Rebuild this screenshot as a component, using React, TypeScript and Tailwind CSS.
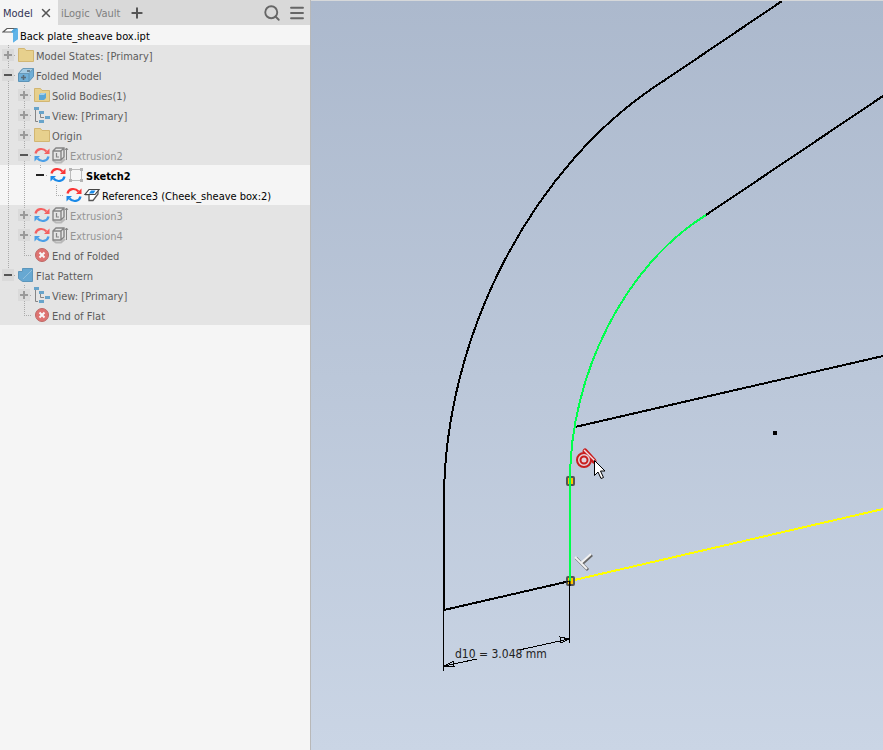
import { Menu, Plus, Search, X } from "lucide-react";

type IconName = "folder" | "solid" | "bodies" | "view" | "extrusion" | "sketch" | "reference" | "end" | "flat";

type TreeRow = {
  label: string;
  icon: IconName;
  // one entry per ancestor column, true where the guide line carries on
  guides: boolean[];
  expander?: "plus" | "minus";
  last?: boolean;
  update?: boolean;
  active?: boolean;
  bold?: boolean;
  muted?: boolean;
};

const rows: TreeRow[] = [
  { label: "Model States: [Primary]", icon: "folder", guides: [], expander: "plus" },
  { label: "Folded Model", icon: "solid", guides: [], expander: "minus" },
  { label: "Solid Bodies(1)", icon: "bodies", guides: [true], expander: "plus" },
  { label: "View: [Primary]", icon: "view", guides: [true], expander: "plus" },
  { label: "Origin", icon: "folder", guides: [true], expander: "plus" },
  { label: "Extrusion2", icon: "extrusion", guides: [true], expander: "minus", update: true, muted: true },
  { label: "Sketch2", icon: "sketch", guides: [true, true], expander: "minus", last: true, update: true, active: true, bold: true },
  { label: "Reference3 (Cheek_sheave box:2)", icon: "reference", guides: [true, true, false], last: true, update: true, active: true },
  { label: "Extrusion3", icon: "extrusion", guides: [true], expander: "plus", update: true, muted: true },
  { label: "Extrusion4", icon: "extrusion", guides: [true], expander: "plus", update: true, muted: true },
  { label: "End of Folded", icon: "end", guides: [true], last: true },
  { label: "Flat Pattern", icon: "flat", guides: [], expander: "minus", last: true },
  { label: "View: [Primary]", icon: "view", guides: [false], expander: "plus" },
  { label: "End of Flat", icon: "end", guides: [false], last: true },
];

const PartIcon = () => (
  <svg className="h-4 w-4 shrink-0" viewBox="0 0 16 16" fill="none">
    <path d="M1 5 5 1.5H14L10 5Z" fill="#fff" stroke="#5a5a5a" strokeWidth="1.2" />
    <path d="M9 5 12 1.5H16V12L11 15.5V6Z" fill="#4fa9e2" />
    <path d="M11 6 16 1.5V12L11 15.5Z" fill="#61b4e8" />
  </svg>
);

const UpdateIcon = () => (
  <svg className="h-4 w-4 shrink-0" viewBox="0 0 16 16" fill="none">
    <path d="M1.5 6.5C2.5 1.5 9 0.5 12.5 4.5" stroke="#fa3636" strokeWidth="2.2" />
    <path d="M15.5 1.5V7H10Z" fill="#fa3636" />
    <path d="M14.5 9.5C13.5 14.5 7 15.5 3.5 11.5" stroke="#1989e8" strokeWidth="2.2" />
    <path d="M0.5 14.5V9H6Z" fill="#1989e8" />
  </svg>
);

const RowIcon = ({ name }: { name: IconName }) => (
  <svg className="h-4 w-4 shrink-0 overflow-visible" viewBox="0 0 16 16" fill="none">
    {name === "folder" && <path d="M0.5 1.5H6.5L8 3.5H15.5V14.5H0.5Z" fill="#e8ca70" stroke="#cda74c" />}
    {name === "bodies" && (
      <>
        <path d="M0.5 1.5H6.5L8 3.5H15.5V14.5H0.5Z" fill="#e8ca70" stroke="#cda74c" />
        <path d="M5 8 7 6H12V11L10 13H5Z" fill="#2f93d3" />
        <path d="M5 8 7 6H12L10 8Z" fill="#8cc8ec" />
      </>
    )}
    {name === "solid" && (
      <>
        <path d="M0.5 6.5 5 1.5H15.5V9.5L11 14.5H0.5Z" fill="#4a9ed3" stroke="#2f78a8" />
        <path d="M0.5 6.5 5 1.5H15.5L11 6.5Z" fill="#8fc3e3" stroke="#3f82ad" />
        <path d="M11 6.5V14.5" stroke="#2f78a8" />
        <path d="M9 4H12M5.5 8V13M3 10.5H8" stroke="#2b4252" strokeWidth="1.5" />
      </>
    )}
    {name === "view" && (
      <>
        <path d="M4.5 2.5H1.5V14.5H4M6.5 7V10.5H10" stroke="#666" />
        <path d="M0 0H5V3H0ZM5 4H10V7H5ZM11 9H16V12H11ZM5 13H10V16H5Z" fill="#3f8fc2" />
      </>
    )}
    {name === "extrusion" && (
      <>
        <path d="M1 13.5 4 15.5H9L13 12" stroke="#aaa" strokeWidth="2" />
        <path d="M1 4 4 1H12V10L9 13H1ZM1 4H9V13M9 4 12 1" stroke="#666" strokeWidth="1.4" />
        <path d="M4.5 6V10H7" stroke="#666" strokeWidth="1.2" />
        <path d="M14.5 13V1M13 3 14.5 1 16 3" stroke="#666" />
      </>
    )}
    {name === "sketch" && (
      <>
        <path d="M2.5 2.5H13.5V13.5H2.5Z" stroke="#bbb" />
        <path d="M1 1H4V4H1ZM12 1H15V4H12ZM1 12H4V15H1ZM12 12H15V15H12Z" fill="#b4b4b4" />
      </>
    )}
    {name === "reference" && (
      <>
        <path d="M1 7.5H5V13.5H9L14 7V3" fill="#fff" stroke="#555" strokeWidth="1.3" />
        <path d="M5 2.5H15L11 7.5H1Z" fill="#fff" stroke="#444" strokeWidth="1.2" />
        <path d="M7 3.5H11.5L9.5 6.5H5Z" fill="#1b8be8" />
      </>
    )}
    {name === "end" && (
      <>
        <circle cx="8" cy="8" r="6.5" fill="#dc4f4c" stroke="#b0403d" />
        <path d="M5.5 5.5 10.5 10.5M10.5 5.5 5.5 10.5" stroke="#fff" strokeWidth="2" />
      </>
    )}
    {name === "flat" && (
      <>
        <path d="M0.5 4.5H4.5V1.5H14.5V14.5H4.5L0.5 11.5Z" fill="#3e94cd" stroke="#2f7cae" />
        <path d="M5 12 14 3" stroke="#74b3da" />
      </>
    )}
  </svg>
);

const Guide = ({ on }: { on: boolean }) => (
  <svg className="h-5 w-4 shrink-0" viewBox="0 0 16 20">
    {on && <path d="M8.5 0V20" stroke="#aaa" strokeDasharray="1 1" />}
  </svg>
);

const Branch = ({ row }: { row: TreeRow }) => (
  <svg className="h-5 w-4 shrink-0" viewBox="0 0 16 20">
    <path d={row.last ? "M8.5 0V10.5M8 10.5H16" : "M8.5 0V20M8 10.5H16"} stroke="#aaa" strokeDasharray="1 1" fill="none" />
    {row.expander && <path d="M2 4H14V16H2Z" fill={row.active ? "#f5f5f5" : "#dadada"} />}
    {row.expander && <path d="M4 9H12V11H4Z" fill={row.expander === "plus" ? "#999" : row.active ? "#222" : "#555"} />}
    {row.expander === "plus" && <path d="M7 6H9V14H7Z" fill="#999" />}
  </svg>
);

const TreeItem = ({ row }: { row: TreeRow }) => (
  <li className={`flex h-5 items-center ${row.active ? "bg-[#f5f5f5] text-black" : "bg-[#e4e4e4] text-[#5c5c5c]"}`}>
    {row.guides.map((on, i) => (
      <Guide key={i} on={on} />
    ))}
    <Branch row={row} />
    <span className={`ml-0.5 flex gap-0.5 ${row.active ? "" : "opacity-75"}`}>
      {row.update && <UpdateIcon />}
      <RowIcon name={row.icon} />
    </span>
    <span className={`ml-0.5 pt-1 whitespace-nowrap ${row.bold ? "font-bold" : ""} ${row.muted ? "text-[#949494]" : ""}`}>{row.label}</span>
  </li>
);

const BrowserPanel = () => (
  <aside className="w-[311px] shrink-0 border-r border-[#b8b8b8] bg-[#f5f5f5]">
    <div className="flex h-[25px] items-center bg-[#d9d9d9] text-[#808080]">
      <div className="flex h-full w-[58px] items-center gap-1.5 bg-[#f5f5f5] pl-[3px] text-[#333355]">
        <button type="button" className="pt-0.5">Model</button>
        <button type="button" aria-label="Close tab">
          <X size={14} strokeWidth={2.5} color="#555" />
        </button>
      </div>
      <button type="button" className="ml-[3px] pt-0.5">iLogic</button>
      <button type="button" className="ml-1.5 pt-0.5">Vault</button>
      <button type="button" aria-label="Add tab" className="ml-2">
        <Plus size={16} strokeWidth={3} color="#555" />
      </button>
      <button type="button" aria-label="Search" className="ml-auto">
        <Search size={18} strokeWidth={2.5} color="#666" />
      </button>
      <button type="button" aria-label="Menu" className="mr-1 ml-[7px]">
        <Menu size={18} strokeWidth={2.5} color="#666" />
      </button>
    </div>
    <div className="flex h-5 items-center gap-0.5 pl-0.5 text-black">
      <PartIcon />
      <span className="pt-1">Back plate_sheave box.ipt</span>
    </div>
    <ul>
      {rows.map((row, i) => (
        <TreeItem key={i} row={row} />
      ))}
    </ul>
  </aside>
);

const SketchView = () => (
  <main className="min-w-0 flex-1 border-t border-[#d6d8da] bg-linear-to-b from-[#acb9cd] to-[#cad5e5]">
    <svg className="h-full w-full" viewBox="311 1 572 749" preserveAspectRatio="xMinYMin slice" fill="none">
      {/* Profile edges */}
      <g stroke="#000" strokeWidth="2" shapeRendering="crispEdges">
        <path d="M782 1 665 80C530 165 444 340 444 500V610L570 581" />
        <path d="M883 96 706 215" />
        <path d="M575 427 883 356" />
      </g>
      <path d="M570 581 883 509" stroke="#ff0" strokeWidth="2" shapeRendering="crispEdges" />
      <path d="M773 431H777V435H773Z" fill="#000" />

      {/* Grips */}
      <g fill="#ffc400" stroke="#555" strokeWidth="2">
        <rect x="567" y="477" width="7" height="8" rx="1" />
        <rect x="567" y="577" width="7" height="8" rx="1" />
      </g>
      <path d="M706 215C625 265 570 375 570 480V581" stroke="#00ff4c" strokeWidth="2" shapeRendering="crispEdges" />
      <path d="M564 582.5 570 581V586" stroke="#000" />

      {/* Dimension */}
      <g stroke="#000" shapeRendering="crispEdges">
        <path d="M443.5 610V671M569.5 581V643" />
        <path d="M444 666 477 659M519 650 569 639" />
        <path d="M444 666 453 661.5 454 666ZM569 639 560 637 561 643Z" />
      </g>
      <text x="455" y="658" fontSize="12" fill="#222">d10 = 3.048 mm</text>

      {/* Perpendicular glyph */}
      <path d="M576 558 588 570M582 564 592 555" stroke="#666" strokeWidth="3" />
      <path d="M575 557 587 569M581 563 591 554" stroke="#f2f2f2" strokeWidth="2" />

      {/* Tangent glyph */}
      <g stroke="#c81e1e">
        <path d="M585 451 594 461" strokeWidth="5" strokeLinecap="round" />
        <circle cx="584" cy="460" r="7" fill="#e4d3dc" strokeWidth="2" />
        <circle cx="584" cy="460" r="3.5" strokeWidth="2" />
        <path d="M584 450 595 461" stroke="#f4dfe3" strokeWidth="1.4" />
      </g>

      {/* Pointer */}
      <path d="M594.5 460.5V475.5L598 472 601 478.5 603.5 477.5 600.5 471H605Z" fill="#fff" stroke="#000" />
    </svg>
  </main>
);

const App = () => {
  return (
    <div className="flex h-screen overflow-hidden font-['DejaVu_Sans_Condensed','Noto_Sans',sans-serif] text-[11px] leading-4">
      <BrowserPanel />
      <SketchView />
    </div>
  );
};

export default App;
